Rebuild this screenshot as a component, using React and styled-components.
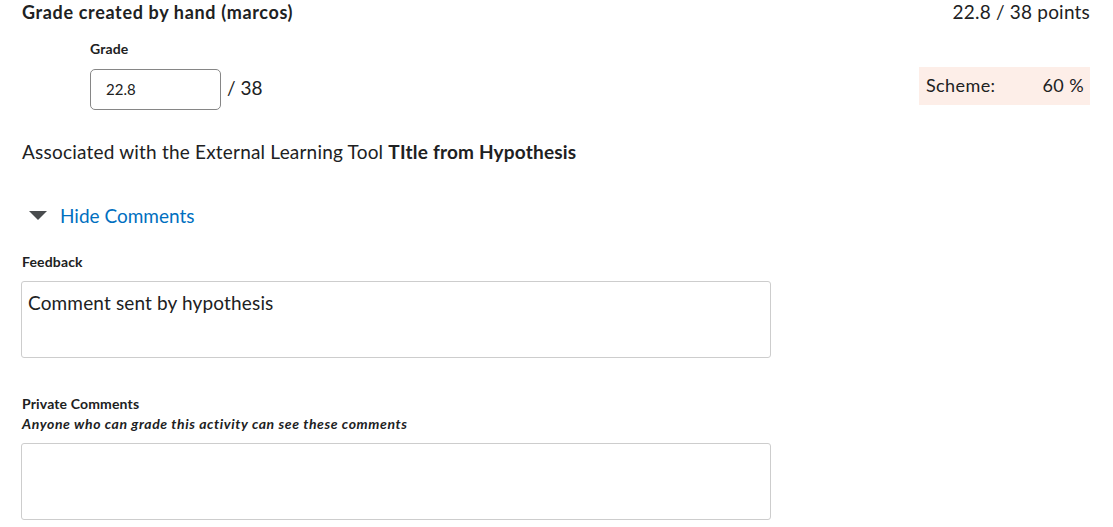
import React from "react";
import styled, { createGlobalStyle } from "styled-components";

const Global = createGlobalStyle`
  body {
    margin: 0;
    background: #fff;
    font-family: Lato, "Noto Sans", sans-serif;
    color: #202122;
  }
`;

const Page = styled.div`
  width: 1113px;
  height: 527px;
  overflow: hidden;
  padding: 0 22px 0 22px;
  box-sizing: border-box;
`;

const Header = styled.div`
  display: flex;
  justify-content: space-between;
  align-items: baseline;
  height: 26px;
`;

const Title = styled.h2`
  margin: 0;
  font-size: 18px;
  font-weight: 700;
  letter-spacing: 0.65px;
  line-height: 24px;
`;

const Points = styled.div`
  font-size: 19px;
  letter-spacing: 0.2px;
  line-height: 24px;
  margin-right: 1px;
`;

const GradeRow = styled.div`
  display: flex;
  justify-content: space-between;
  align-items: flex-start;
`;

const GradeBlock = styled.div`
  padding-left: 68px;
  padding-top: 14px;
`;

const Label = styled.div`
  font-size: 14px;
  font-weight: 700;
  letter-spacing: 0.15px;
  line-height: 18px;
  margin-bottom: ${p => p.$gap || 0}px;
`;

const Hint = styled.div`
  font-size: 14px;
  font-style: italic;
  font-weight: 700;
  letter-spacing: 0.6px;
  line-height: 22px;
  margin-bottom: 8px;
`;

const InputLine = styled.div`
  display: flex;
  align-items: center;
  gap: 6px;
`;

const GradeInput = styled.div`
  width: 131px;
  height: 41px;
  box-sizing: border-box;
  border: 1px solid #868686;
  border-radius: 5px;
  padding: 0 15px 2px;
  display: flex;
  align-items: center;
  font-size: 15px;
`;

const OutOf = styled.span`
  font-size: 19px;
  padding-bottom: 4px;
`;

const Scheme = styled.div`
  margin-top: 41px;
  width: 171px;
  height: 38px;
  box-sizing: border-box;
  background: #fdeee8;
  display: flex;
  justify-content: space-between;
  align-items: center;
  padding: 0 6px 3px 7px;
  font-size: 18px;
  letter-spacing: 0.4px;
  margin-right: 1px;
`;

const Assoc = styled.p`
  margin: 30px 0 0;
  font-size: 19px;
  letter-spacing: 0.2px;
  line-height: 24px;
`;

const Toggle = styled.button`
  display: flex;
  align-items: center;
  gap: 13px;
  background: none;
  border: 0;
  padding: 0 0 0 7px;
  margin-top: 40px;
  font: inherit;
  font-size: 19px;
  color: #006fbf;
  cursor: pointer;
  line-height: 24px;
`;

const Section = styled.div`
  margin-top: ${p => p.$top}px;
`;

const TextBox = styled.div`
  width: 750px;
  height: 77px;
  margin-left: -1px;
  box-sizing: border-box;
  border: 1px solid #cdcdcd;
  border-radius: 3px;
  padding: 9px 6px;
  font-size: 19px;
  letter-spacing: 0.15px;
  line-height: 24px;
`;

export default function App() {
  return (
    <Page>
      <Global />
      <Header>
        <Title>Grade created by hand (marcos)</Title>
        <Points>22.8 / 38 points</Points>
      </Header>
      <GradeRow>
        <GradeBlock>
          <Label $gap={11}>Grade</Label>
          <InputLine>
            <GradeInput>22.8</GradeInput>
            <OutOf>/ 38</OutOf>
          </InputLine>
        </GradeBlock>
        <Scheme>
          <span>Scheme:</span>
          <span>60 %</span>
        </Scheme>
      </GradeRow>
      <Assoc>
        Associated with the External Learning Tool <b>TItle from Hypothesis</b>
      </Assoc>
      <Toggle>
        <svg width="18" height="10" viewBox="0 0 18 10">
          <path d="M0 0 H18 L9 9 Z" fill="#494c4e" />
        </svg>
        Hide Comments
      </Toggle>
      <Section $top={25}>
        <Label $gap={10}>Feedback</Label>
        <TextBox>Comment sent by hypothesis</TextBox>
      </Section>
      <Section $top={37}>
        <Label>Private Comments</Label>
        <Hint>Anyone who can grade this activity can see these comments</Hint>
        <TextBox />
      </Section>
    </Page>
  );
}
